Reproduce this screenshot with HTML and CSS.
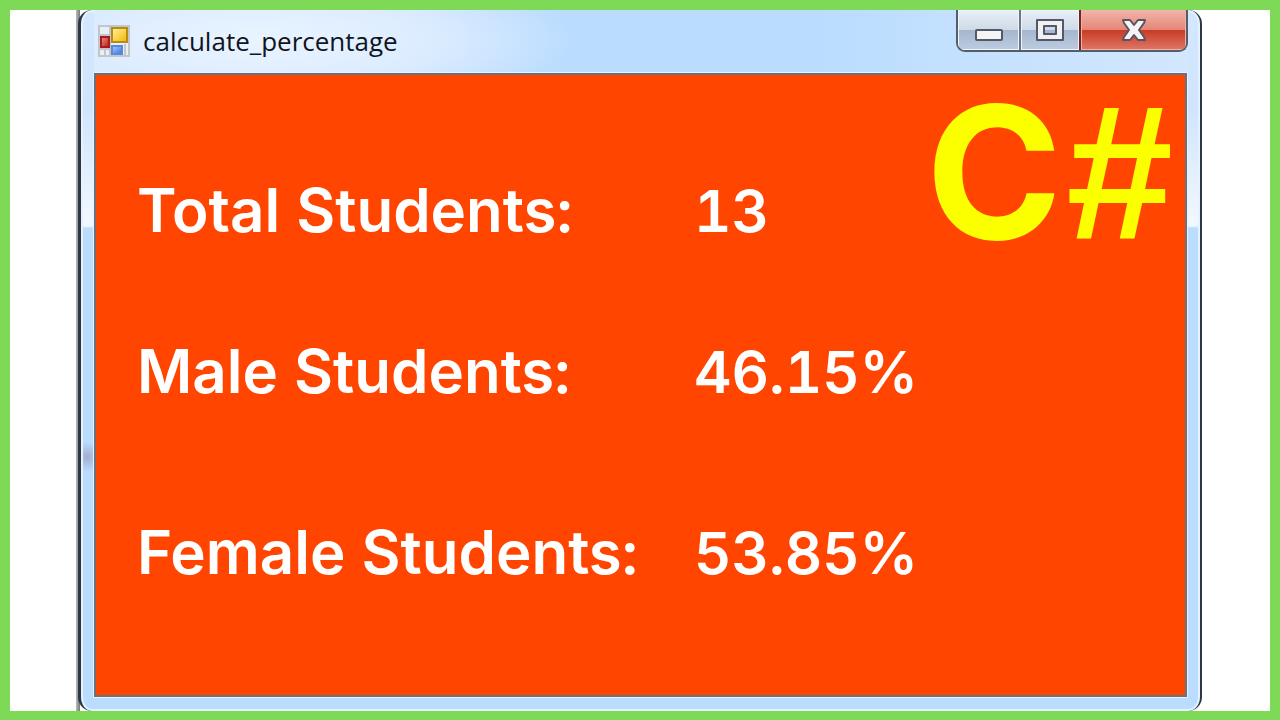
FILE: index.html
```html
<!DOCTYPE html>
<html lang="en">
<head>
<meta charset="utf-8">
<title>calculate_percentage</title>
<link rel="stylesheet" href="styles.css">
</head>
<body>
<main class="frame">
  <div class="backdrop">
    <section class="window">
      <header class="titlebar">
        <svg class="app-icon" viewBox="0 0 32 32" aria-hidden="true">
          <defs>
            <linearGradient id="gold" x2="1" y2="1"><stop offset="0" stop-color="#fff0a0"/><stop offset="1" stop-color="#f3b800"/></linearGradient>
            <linearGradient id="red" x2="1" y2="1"><stop offset="0" stop-color="#f09080"/><stop offset="1" stop-color="#b51b18"/></linearGradient>
            <linearGradient id="blue" x2="1" y2="1"><stop offset="0" stop-color="#a8ccff"/><stop offset="1" stop-color="#3a70d8"/></linearGradient>
          </defs>
          <path d="M1 1h30v30H1z" fill="#e6effa" stroke="#c3c6c9" stroke-width="2"/>
          <path d="M12 1v30M1 10h11M1 24h11M27 19v12M7 24v7" fill="none" stroke="#c3c6c9" stroke-width="2"/>
          <path d="M14 3h15v14H14z" fill="url(#gold)" stroke="#b88a18" stroke-width="2"/>
          <path d="M3 12h8v10H3z" fill="url(#red)" stroke="#a51c20" stroke-width="2"/>
          <path d="M14 21h10v8H14z" fill="url(#blue)" stroke="#5c88dc" stroke-width="2"/>
        </svg>
        <h1 class="title">calculate_percentage</h1>
        <div class="controls">
          <button class="control minimize" type="button" aria-label="Minimize">
            <svg viewBox="0 0 28 24" aria-hidden="true"><rect x="1" y="12" width="26" height="10" rx="1" fill="#f4f4f4" stroke="#53586b" stroke-width="2"/></svg>
          </button>
          <button class="control maximize" type="button" aria-label="Maximize">
            <svg viewBox="0 0 28 24" aria-hidden="true"><path fill-rule="evenodd" d="M1 2h26v20H1zM8 8v8h12V8z" fill="#f1f1f1" stroke="#53586b" stroke-width="2" stroke-linejoin="round"/></svg>
          </button>
          <button class="control close" type="button" aria-label="Close">
            <svg viewBox="0 0 28 24" aria-hidden="true"><path d="M3 2h7l4 5 4-5h7l-1 3-5 7 5 7 1 3h-7l-4-5-4 5H3l1-3 5-7-5-7z" fill="#f4f4f4" stroke="#5b5362" stroke-width="2" stroke-linejoin="round"/></svg>
          </button>
        </div>
      </header>
      <div class="client">
        <dl class="stats">
          <dt>Total Students:</dt><dd>13</dd>
          <dt>Male Students:</dt><dd>46.15%</dd>
          <dt>Female Students:</dt><dd>53.85%</dd>
        </dl>
        <p class="badge">C<span class="hash">#</span></p>
      </div>
    </section>
  </div>
</main>
</body>
</html>
```
FILE: styles.css
```css
* { box-sizing: border-box; }

body {
  margin: 0;
  background: #fff;
  font-family: Inter, "Liberation Sans", Arial, sans-serif;
}

.frame {
  display: flex;
  min-height: 100vh;
  border: 10px solid #7ed957;
  border-bottom-width: 9px;
}

.backdrop {
  display: flex;
  flex: 1;
  margin: 0 68px 0 66px;
  background:
    linear-gradient(90deg, #b9b9b9 0, #77797b 4px, transparent 4px);
}

.window {
  display: flex;
  flex: 1;
  flex-direction: column;
  margin-left: 2px;
  padding: 0 13px 14px;
  border: solid #2e3740;
  border-width: 0 2px 0 3px;
  border-radius: 14px;
  background:
    radial-gradient(ellipse 14px 15px at 6px 447px, #a3acd0, transparent),
    linear-gradient(#d3e7fe 0, #d0e5fd 100px, #f2f8ff 216px, #b9dcff 218px, #b9dcff 100%);
  box-shadow: inset 0 0 0 2px #e6f2ff;
}

.titlebar {
  display: flex;
  align-items: center;
  height: 63px;
  margin-right: -1px;
  padding: 0 0 2px 4px;
  background: radial-gradient(ellipse 320px 80px at 160px 30px, #eaf4ff 0, #dcecff 55%, transparent 100%), linear-gradient(90deg, #d3e7fe, #b9dcff 45%, #b9dcff 65%, #d3e7fe);
}

.app-icon { width: 32px; height: 32px; }

.title {
  flex: 1;
  margin: 0 0 0 13px;
  color: #101522;
  font: 400 26px/36px "Open Sans", "Noto Sans", sans-serif;
}

.controls {
  display: flex;
  align-self: flex-start;
  height: 42px;
  overflow: hidden;
  border: 2px solid #555d69;
  border-top: 0;
  border-radius: 0 0 9px 9px;
}

.control {
  display: flex;
  align-items: center;
  justify-content: center;
  width: 62px;
  padding: 0;
  border: 0;
  border-right: 2px solid #6c7684;
  background: linear-gradient(#e8f0f8, #cfdae7 50%, #a5b6ce 51%, #bdcce0);
  box-shadow: inset 0 0 0 1px #edf4fb;
}

.control svg { width: 28px; height: 24px; }

.minimize { width: 63px; }

.maximize { width: 60px; border-right-color: #74241f; }

.close {
  width: 105px;
  border-right: 0;
  background: linear-gradient(#f1b5ab, #e48676 50%, #c83c25 51%, #de7867);
  box-shadow: inset 0 0 0 1px #f0b3a9;
}

.client {
  position: relative;
  flex: 1;
  padding: 103px 41px;
  border: 2px solid #68717d;
  outline: 1px solid #e6f3ff;
  background: #ff4500;
}

.stats {
  display: grid;
  grid-template-columns: 557px 1fr;
  grid-template-rows: 161px 181px auto;
  align-items: baseline;
  margin: 0;
  color: #fff;
  font-size: 60px;
  font-weight: 600;
  font-variant-numeric: tabular-nums;
  line-height: 64px;
}

.stats dd {
  margin: 0;
  font-size: 58px;
}

.badge {
  position: absolute;
  top: -7px;
  right: 12px;
  display: flex;
  align-items: baseline;
  gap: 4px;
  margin: 0;
  color: #fbff00;
  font-size: 184px;
  font-weight: 700;
  line-height: 208px;
}

.hash {
  font-family: "Liberation Sans", Arial, sans-serif;
  font-size: 192px;
}
```
